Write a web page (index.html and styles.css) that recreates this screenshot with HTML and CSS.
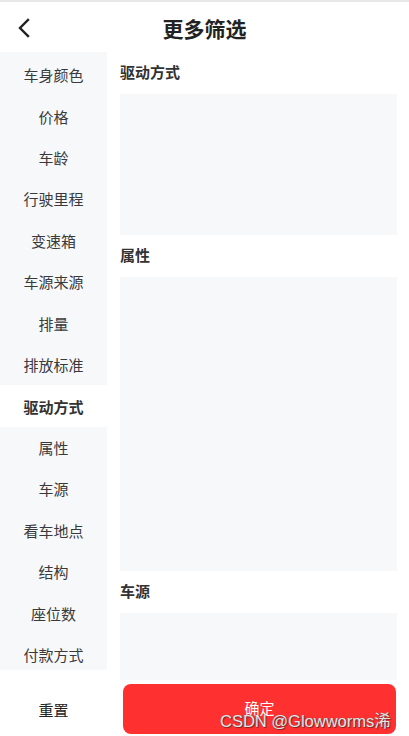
FILE: index.html
```html
<!DOCTYPE html>
<html lang="zh">
<head>
<meta charset="utf-8">
<title>更多筛选</title>
<link rel="stylesheet" href="styles.css">
</head>
<body>
<div class="page">
  <header class="header">
    <span class="back">
      <svg width="14" height="20" viewBox="0 0 14 20"><path d="M11 2 L3 10 L11 18" fill="none" stroke="#222" stroke-width="2.4" stroke-linecap="square"/></svg>
    </span>
    <h1 class="title">更多筛选</h1>
    <span></span>
  </header>
  <div class="main">
    <nav class="sidebar">
      <div class="side-item">车身颜色</div>
      <div class="side-item">价格</div>
      <div class="side-item">车龄</div>
      <div class="side-item">行驶里程</div>
      <div class="side-item">变速箱</div>
      <div class="side-item">车源来源</div>
      <div class="side-item">排量</div>
      <div class="side-item">排放标准</div>
      <div class="side-item active">驱动方式</div>
      <div class="side-item">属性</div>
      <div class="side-item">车源</div>
      <div class="side-item">看车地点</div>
      <div class="side-item">结构</div>
      <div class="side-item">座位数</div>
      <div class="side-item">付款方式</div>
    </nav>
    <section class="content">
      <div class="sec-title">驱动方式</div>
      <div class="sec-box box-1"></div>
      <div class="sec-title">属性</div>
      <div class="sec-box box-2"></div>
      <div class="sec-title">车源</div>
      <div class="sec-box box-3"></div>
    </section>
  </div>
  <footer class="footer">
    <div class="reset">重置</div>
    <button class="confirm">确定</button>
  </footer>
  <div class="watermark">CSDN @Glowworms浠</div>
</div>
</body>
</html>
```

FILE: styles.css
```css
* { box-sizing: border-box; }
html, body { margin: 0; padding: 0; background: #fff; }
body {
  font-family: "Noto Sans CJK SC", "Noto Sans", sans-serif;
  color: #323233;
}
.page {
  position: relative;
  width: 409px;
  height: 736px;
  display: flex;
  flex-direction: column;
  overflow: hidden;
  border-top: 2px solid #e8e8e8;
}
.header {
  height: 50px;
  flex: none;
  display: grid;
  grid-template-columns: 60px 1fr 60px;
  align-items: center;
}
.back {
  display: flex;
  padding-left: 17px;
  padding-top: 2px;
}
.title {
  margin: 0;
  text-align: center;
  font-size: 21px;
  font-weight: 700;
  color: #222;
  line-height: 28px;
  padding-top: 1px;
}
.main {
  height: 628px;
  flex: none;
  display: flex;
}
.sidebar {
  width: 107px;
  height: 618px;
  flex: none;
  background: #f7f8fa;
  overflow: hidden;
  padding-top: 2px;
}
.side-item {
  height: 41.43px;
  display: flex;
  align-items: center;
  justify-content: center;
  font-size: 15px;
  color: #3a3a3c;
}
.side-item.active {
  background: #fff;
  font-weight: 700;
  color: #323233;
}
.content {
  flex: 1;
  padding: 10px 12px 0 13px;
  overflow: hidden;
}
.sec-title {
  height: 20px;
  line-height: 20px;
  font-size: 15px;
  font-weight: 700;
  margin-bottom: 12px;
  color: #323233;
}
.sec-box {
  background: #f7f8fa;
  margin-bottom: 10px;
}
.box-1 { height: 141px; }
.box-2 { height: 294px; }
.box-3 { height: 68px; }
.footer {
  height: 56px;
  flex: none;
  display: flex;
  align-items: flex-start;
  padding-top: 4px;
}
.reset {
  width: 107px;
  height: 50px;
  display: flex;
  align-items: center;
  justify-content: center;
  font-size: 15px;
  color: #222;
}
.confirm {
  margin-left: 16px;
  width: 273px;
  height: 50px;
  border: none;
  border-radius: 8px;
  background: #ff3030;
  color: #fff;
  font-family: "Noto Sans CJK SC", "Noto Sans", sans-serif;
  font-size: 15px;
  padding: 0 0 4px;
}
.watermark {
  position: absolute;
  left: 220px;
  top: 706px;
  font-family: "Liberation Sans", "Noto Sans CJK SC", sans-serif;
  font-size: 16.5px;
  color: #e4e4e4;
  text-shadow: 0 0 1px #555, 1px 1px 1px rgba(0,0,0,0.45);
  white-space: nowrap;
}
```
